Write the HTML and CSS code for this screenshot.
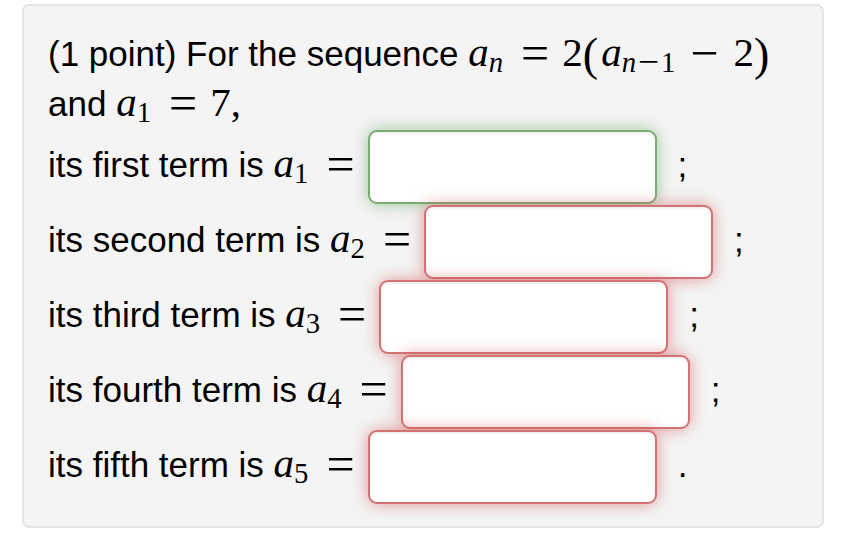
FILE: index.html
```html
<!DOCTYPE html>
<html>
<head>
<meta charset="utf-8">
<title>Sequence problem</title>
<link rel="stylesheet" href="styles.css">
</head>
<body>
<div class="problem">
	<div class="intro">
		(1 point) For the sequence
		<span class="m"><i>a</i><sub><i>n</i></sub><span class="rel">=</span>2<span class="paren open">(</span><i>a</i><sub><i>n</i><span class="sop">−</span>1</sub><span class="bin">−</span>2<span class="paren">)</span></span>
		<br>
		and <span class="m"><i>a</i><sub>1</sub><span class="rel">=</span>7,</span>
	</div>

	<div class="row">
		<span class="label">its first term is <span class="m"><i>a</i><sub>1</sub><span class="rel">=</span></span></span>
		<input class="answer correct" type="text">
		<span class="punct">;</span>
	</div>
	<div class="row">
		<span class="label">its second term is <span class="m"><i>a</i><sub>2</sub><span class="rel">=</span></span></span>
		<input class="answer incorrect" type="text">
		<span class="punct">;</span>
	</div>
	<div class="row">
		<span class="label">its third term is <span class="m"><i>a</i><sub>3</sub><span class="rel">=</span></span></span>
		<input class="answer incorrect" type="text">
		<span class="punct">;</span>
	</div>
	<div class="row">
		<span class="label">its fourth term is <span class="m"><i>a</i><sub>4</sub><span class="rel">=</span></span></span>
		<input class="answer incorrect" type="text">
		<span class="punct">;</span>
	</div>
	<div class="row">
		<span class="label">its fifth term is <span class="m"><i>a</i><sub>5</sub><span class="rel">=</span></span></span>
		<input class="answer incorrect" type="text">
		<span class="punct">.</span>
	</div>
</div>
</body>
</html>
```

FILE: styles.css
```css
body {
	margin: 0;
	background: #fff;
	color: #000;
	font-family: "Liberation Sans", Arial, sans-serif;
	font-size: 35px;
	line-height: 50px;
}

.problem {
	box-sizing: border-box;
	width: 802px;
	margin: 4px 0 0 22px;
	padding: 23px 24px 22px;
	background: #f4f4f4;
	border: 2px solid #e4e4e4;
	border-radius: 7px;
}

.row {
	display: flex;
	align-items: center;
	height: 75px;
}
.label {
	white-space: nowrap;
	margin-bottom: 3px;
}

/* answer blanks */
.answer {
	box-sizing: border-box;
	width: 289px;
	height: 74px;
	margin: 0;
	padding: 0 14px;
	font: inherit;
	background: #fff;
	border: 2px solid #ccc;
	border-radius: 9px;
	outline: none;
}
.correct {
	border-color: #78ae74;
	box-shadow: inset 0 2px 2px rgba(0,0,0,.06), 0 0 16px rgba(96,165,90,.6);
}
.incorrect {
	border-color: #d27373;
	box-shadow: inset 0 2px 2px rgba(0,0,0,.06), 0 0 16px rgba(210,85,85,.6);
}
.punct {
	margin-left: 21px;
	margin-bottom: 3px;
}

/* typeset math */
.m {
	font-family: "Liberation Serif", "Times New Roman", serif;
	font-size: 41px;
	line-height: 0;
	white-space: nowrap;
}
.m i {
	font-style: italic;
}
.m sub {
	font-size: .7em;
	line-height: 0;
	vertical-align: -0.22em;
}
.rel {
	font-size: 50px;
	vertical-align: -4px;
	margin: 0 13px 0 18px;
}
.bin {
	font-size: 50px;
	vertical-align: -4px;
	margin: 0 15px;
}
.sop {
	font-size: 1.3em;
	vertical-align: -2px;
	margin: 0 2px;
}
.paren {
	font-size: 46px;
	vertical-align: -4px;
}
.paren.open {
	margin-right: 3px;
}
```
